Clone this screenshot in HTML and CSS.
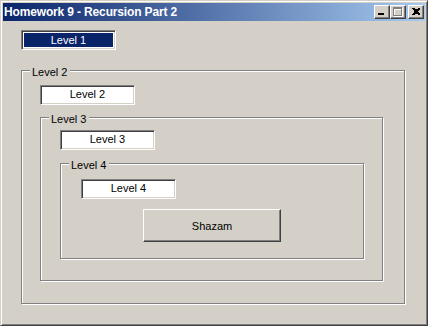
FILE: index.html
```html
<!DOCTYPE html>
<html lang="en">
<head>
    <meta charset="UTF-8">
    <title>Homework 9 - Recursion Part 2</title>
    <link rel="stylesheet" href="styles.css">
</head>
<body>
    <div class="window">
        <div class="titlebar">
            <span class="title">Homework 9 - Recursion Part 2</span>
            <div class="caption-buttons">
                <span class="cap-btn">
                    <svg width="14" height="12" viewBox="1 1 14 12" shape-rendering="crispEdges">
                        <rect x="4" y="8" width="6" height="2" fill="#000"/>
                    </svg>
                </span>
                <span class="cap-btn">
                    <!-- maximize is greyed out -->
                    <svg width="14" height="12" viewBox="1 1 14 12" shape-rendering="crispEdges">
                        <path d="M4 3h9v9h-9z M5 5h7v6h-7z" fill="#fff" fill-rule="evenodd"/>
                        <path d="M3 2h9v9h-9z M4 4h7v6h-7z" fill="#808080" fill-rule="evenodd"/>
                    </svg>
                </span>
                <span class="cap-btn close">
                    <svg width="14" height="12" viewBox="1 1 14 12" shape-rendering="crispEdges">
                        <path d="M4 3h2l1 1h2l1-1h2v1l-2 2v1l2 2v1h-2l-1-1h-2l-1 1h-2v-1l2-2v-1l-2-2z" fill="#000"/>
                    </svg>
                </span>
            </div>
        </div>

        <div class="client">
            <div class="textbox selected"><span>Level 1</span></div>

            <div class="group g2">
                <span class="group-label">Level 2</span>
                <div class="textbox">Level 2</div>

                <div class="group g3">
                    <span class="group-label">Level 3</span>
                    <div class="textbox">Level 3</div>

                    <div class="group g4">
                        <span class="group-label">Level 4</span>
                        <div class="textbox">Level 4</div>
                        <button class="btn" type="button">Shazam</button>
                    </div>
                </div>
            </div>
        </div>
    </div>
</body>
</html>
```

FILE: styles.css
```css
:root {
    --face: #d4d0c8;
    --shadow: #808080;
    --dark: #404040;
    --highlight: #ffffff;
    --select: #0a246a;
}

* {
    box-sizing: border-box;
}

body {
    margin: 0;
    background: var(--face);
    font-family: 'Liberation Sans', Arial, sans-serif;
    font-size: 11px;
    color: #000;
}

.window {
    width: 428px;
    height: 326px;
    padding: 2px;
    background: var(--face);
    border: 1px solid;
    border-color: var(--face) var(--dark) var(--dark) var(--face);
    box-shadow: inset 1px 1px var(--highlight), inset -1px -1px var(--shadow);
}

/* Title bar */
.titlebar {
    height: 18px;
    display: flex;
    align-items: center;
    padding: 0 1px 0 1px;
    background: linear-gradient(to right, #0a246a, #a6caf0);
}

.title {
    color: #fff;
    font-weight: bold;
    font-size: 12px;
    letter-spacing: -0.15px;
    line-height: 18px;
    white-space: nowrap;
}

.caption-buttons {
    display: flex;
    margin-left: auto;
}

.cap-btn {
    display: block;
    width: 16px;
    height: 14px;
    background: var(--face);
    border: 1px solid;
    border-color: var(--highlight) var(--dark) var(--dark) var(--highlight);
    box-shadow: inset -1px -1px var(--shadow);
}

.cap-btn svg {
    display: block;
}

.cap-btn.close {
    margin-left: 2px;
}

/* Client area */
.client {
    margin-top: 1px;
    padding: 8px 0 0 18px;
}

.textbox {
    width: 95px;
    height: 20px;
    padding: 1px 0 3px;
    background: #fff;
    border: 1px solid;
    border-color: var(--shadow) var(--highlight) var(--highlight) var(--shadow);
    box-shadow: inset 1px 1px var(--dark), inset -1px -1px var(--face);
    text-align: center;
    line-height: 14px;
}

.textbox.selected {
    padding: 2px;
}

.textbox.selected span {
    display: block;
    height: 14px;
    background: var(--select);
    color: #fff;
}

/* Group boxes */
.group {
    position: relative;
    border: 1px solid var(--shadow);
    box-shadow: 1px 1px var(--highlight), inset 1px 1px var(--highlight);
}

.group-label {
    position: absolute;
    top: -5px;
    left: 8px;
    padding: 0 3px 0 2px;
    background: var(--face);
    line-height: 13px;
}

.g2 {
    width: 384px;
    height: 234px;
    margin-top: 20px;
    padding: 14px 0 0 18px;
}

.g3 {
    width: 343px;
    height: 164px;
    margin-top: 12px;
    padding: 12px 0 0 19px;
}

.g4 {
    width: 304px;
    height: 96px;
    margin-top: 13px;
    padding: 15px 0 0 20px;
}

.btn {
    display: block;
    width: 138px;
    height: 33px;
    margin: 10px 0 0 62px;
    padding: 0;
    background: var(--face);
    border: 1px solid;
    border-color: var(--highlight) var(--dark) var(--dark) var(--highlight);
    box-shadow: inset -1px -1px var(--shadow);
    font-family: inherit;
    font-size: 11px;
    color: #000;
}
```
